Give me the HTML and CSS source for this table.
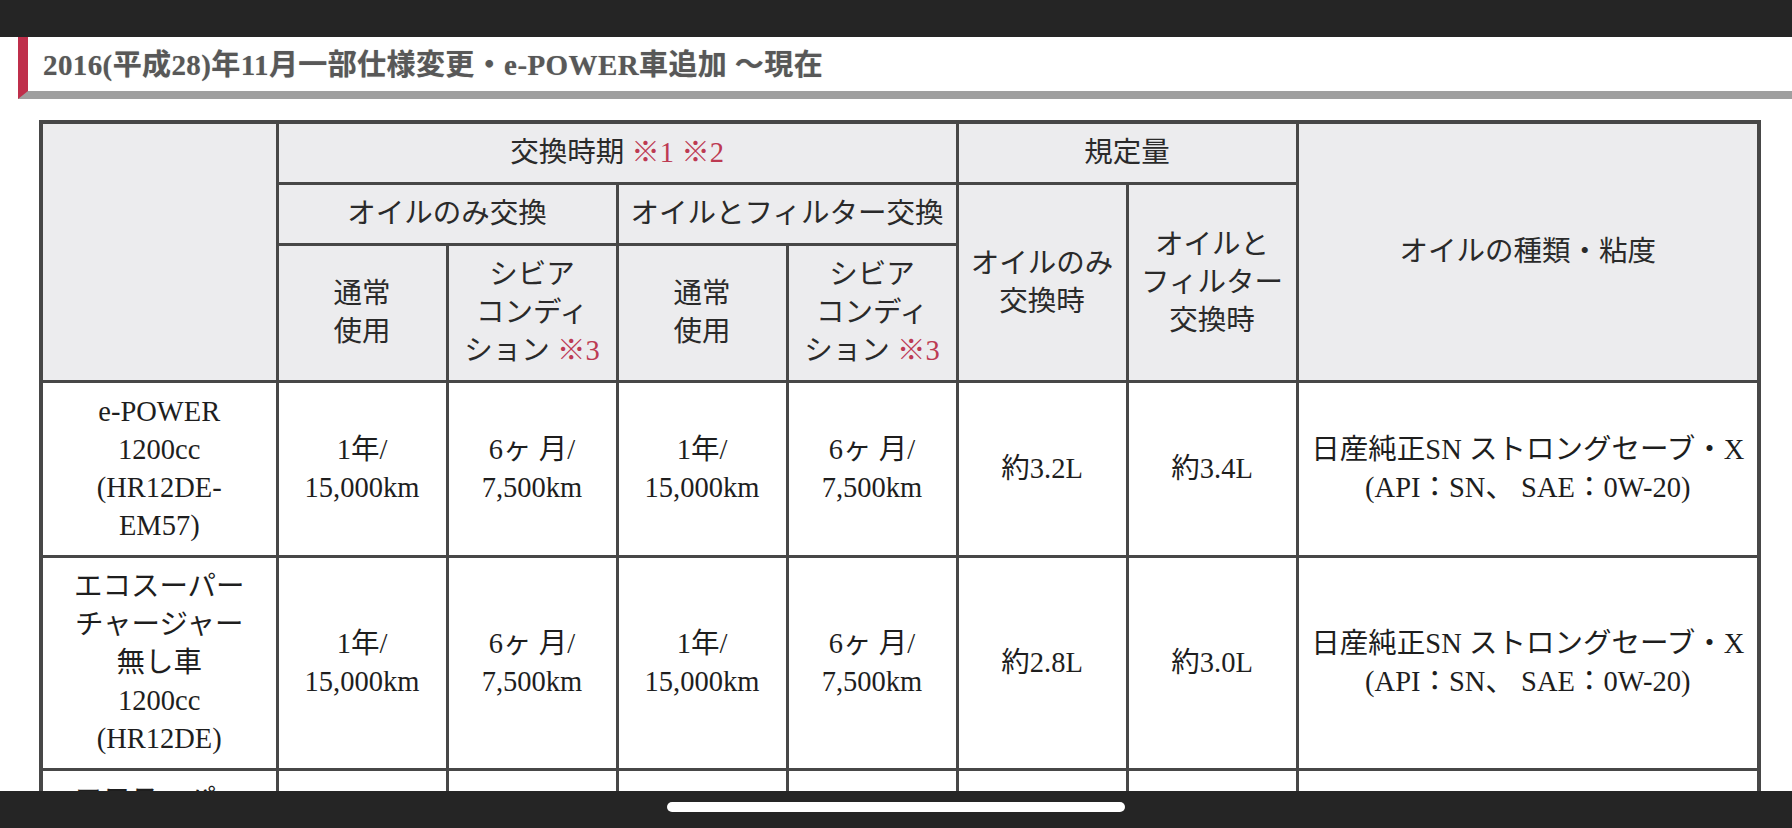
FILE: index.html
```html
<!DOCTYPE html>
<html lang="ja">
<head>
<meta charset="utf-8">
<title>オイル交換</title>
<link rel="stylesheet" href="styles.css">
</head>
<body>
<div class="statusbar"></div>
<h2 class="title">2016(平成28)年11月一部仕様変更・e-POWER車追加 〜現在</h2>
<table class="oil">
  <colgroup>
    <col class="c-name">
    <col class="c-mid"><col class="c-mid"><col class="c-mid"><col class="c-mid">
    <col class="c-mid"><col class="c-mid">
    <col class="c-type">
  </colgroup>
  <thead>
    <tr>
      <th rowspan="3"></th>
      <th colspan="4">交換時期 <span class="note">※1 ※2</span></th>
      <th colspan="2">規定量</th>
      <th rowspan="3">オイルの種類・粘度</th>
    </tr>
    <tr>
      <th colspan="2">オイルのみ交換</th>
      <th colspan="2">オイルとフィルター交換</th>
      <th rowspan="2">オイルのみ<br>交換時</th>
      <th rowspan="2">オイルと<br>フィルター<br>交換時</th>
    </tr>
    <tr>
      <th>通常<br>使用</th>
      <th>シビア<br>コンディ<br>ション <span class="note">※3</span></th>
      <th>通常<br>使用</th>
      <th>シビア<br>コンディ<br>ション <span class="note">※3</span></th>
    </tr>
  </thead>
  <tbody>
    <tr>
      <td>e-POWER<br>1200cc<br>(HR12DE-<br>EM57)</td>
      <td>1年/<br>15,000km</td>
      <td>6ヶ 月/<br>7,500km</td>
      <td>1年/<br>15,000km</td>
      <td>6ヶ 月/<br>7,500km</td>
      <td>約3.2L</td>
      <td>約3.4L</td>
      <td class="type">日産純正SN ストロングセーブ・X<br>(API：SN、 SAE：0W-20)</td>
    </tr>
    <tr>
      <td>エコスーパー<br>チャージャー<br>無し車<br>1200cc<br>(HR12DE)</td>
      <td>1年/<br>15,000km</td>
      <td>6ヶ 月/<br>7,500km</td>
      <td>1年/<br>15,000km</td>
      <td>6ヶ 月/<br>7,500km</td>
      <td>約2.8L</td>
      <td>約3.0L</td>
      <td class="type">日産純正SN ストロングセーブ・X<br>(API：SN、 SAE：0W-20)</td>
    </tr>
    <tr>
      <td>エコスーパー<br>チャージャー<br>付き車<br>1200cc<br>(HR12DDR)</td>
      <td>1年/<br>15,000km</td>
      <td>6ヶ 月/<br>7,500km</td>
      <td>1年/<br>15,000km</td>
      <td>6ヶ 月/<br>7,500km</td>
      <td>約2.8L</td>
      <td>約3.0L</td>
      <td class="type">日産純正SN ストロングセーブ・X<br>(API：SN、 SAE：0W-20)</td>
    </tr>
  </tbody>
</table>
<div class="homebar"><div class="pill"></div></div>
</body>
</html>
```
FILE: styles.css
```css
html, body {
  margin: 0;
  padding: 0;
  background: #ffffff;
  overflow: hidden;
  height: 828px;
}

body {
  font-family: "Liberation Serif", "Noto Sans CJK JP", serif;
  color: #222222;
}

.statusbar {
  height: 37px;
  background: #252525;
}

.title {
  margin: 0 0 0 18px;
  height: 51px;
  line-height: 50px;
  padding: 3px 0 0 15px;
  border-left: 10px solid #bf2f4b;
  border-bottom: 8px solid #9f9f9f;
  font-size: 29px;
  font-weight: bold;
  color: #585858;
  letter-spacing: 0.4px;
  white-space: nowrap;
  text-shadow: 0 0 1px rgba(0, 0, 0, 0.3);
}

.oil {
  margin: 21px 0 0 39px;
  border-collapse: collapse;
  table-layout: fixed;
  width: 1719px;
  border: 4px solid #474747;
  font-size: 28.5px;
  line-height: 38px;
}

.c-name { width: 236px; }
.c-mid { width: 170px; }
.c-type { width: 462px; }

.oil th,
.oil td {
  border: 3px solid #474747;
  padding: 10px 4px;
  text-align: center;
  vertical-align: middle;
}

.oil th {
  background: #ececee;
  font-weight: normal;
  color: #2a2a2a;
}

.oil td {
  background: #ffffff;
  color: #1e1e1e;
}

.oil td.type {
  white-space: nowrap;
}

.note {
  color: #bd3a52;
}

.homebar {
  position: fixed;
  left: 0;
  right: 0;
  bottom: 0;
  height: 37px;
  background: #252525;
  display: flex;
  justify-content: center;
  align-items: flex-start;
}

.pill {
  margin-top: 11px;
  width: 458px;
  height: 10px;
  border-radius: 5px;
  background: #ffffff;
}
```
